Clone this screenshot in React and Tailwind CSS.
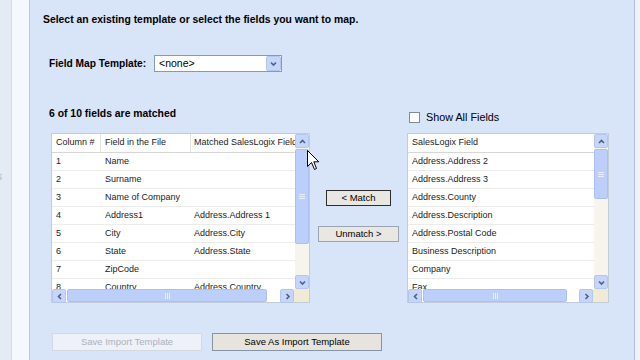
import React from 'react'

const font = "font-['Liberation_Sans',Arial,sans-serif]"

const leftRows = [
  ['1', 'Name', ''],
  ['2', 'Surname', ''],
  ['3', 'Name of Company', ''],
  ['4', 'Address1', 'Address.Address 1'],
  ['5', 'City', 'Address.City'],
  ['6', 'State', 'Address.State'],
  ['7', 'ZipCode', ''],
  ['8', 'Country', 'Address.Country'],
]

const rightRows = [
  'Address.Address 2',
  'Address.Address 3',
  'Address.County',
  'Address.Description',
  'Address.Postal Code',
  'Business Description',
  'Company',
  'Fax',
]

const chevrons = {
  up: 'M2 6 L4.5 3.5 L7 6',
  down: 'M2 3.5 L4.5 6 L7 3.5',
  left: 'M6 2 L3.5 4.5 L6 7',
  right: 'M3.5 2 L6 4.5 L3.5 7',
}

function ArrowBtn({ dir }) {
  return (
    <div className="w-[14px] h-[14px] shrink-0 rounded-[2px] bg-[#c6d6fb] border border-[#b4c6ee] flex items-center justify-center">
      <svg width="9" height="9" viewBox="0 0 9 9">
        <path d={chevrons[dir]} fill="none" stroke="#4d6185" strokeWidth="1.6" />
      </svg>
    </div>
  )
}

function Grip({ vertical }) {
  const line = vertical ? 'w-[6px] h-[1px] bg-[#e8eefc]' : 'w-[1px] h-[6px] bg-[#e8eefc]'
  return (
    <div className={vertical ? 'flex flex-col gap-[1px]' : 'flex gap-[1px]'}>
      <span className={line} />
      <span className={line} />
      <span className={line} />
    </div>
  )
}

function VScroll({ thumb }) {
  return (
    <div className="w-[14px] flex flex-col bg-[#f6f4ec]">
      <ArrowBtn dir="up" />
      <div className={`${thumb} mt-[1px] rounded-[2px] bg-[#bccffa] border border-[#aac0f0] flex items-center justify-center`}>
        <Grip vertical />
      </div>
      <div className="flex-1" />
      <ArrowBtn dir="down" />
    </div>
  )
}

function HScroll({ thumb }) {
  return (
    <div className="h-[13px] flex bg-white">
      <ArrowBtn dir="left" />
      <div className={`${thumb} ml-[1px] rounded-[2px] bg-[#bccffa] border border-[#aac0f0] flex items-center justify-center`}>
        <Grip />
      </div>
      <div className="flex-1" />
      <ArrowBtn dir="right" />
      <div className="w-[15px] bg-[#f1ebd6]" />
    </div>
  )
}

function LeftGrid() {
  return (
    <div className="w-[259px] h-[170px] border border-[#c3cdd9] bg-white flex flex-col">
      <div className="flex flex-1 min-h-0">
        <div className="flex-1 overflow-hidden text-[9px] text-[#1b1b1b] whitespace-nowrap">
          <div className="h-[19px] flex items-center border-b border-[#d6d6d6]">
            <div className="w-[49px] h-full pl-[4px] flex items-center border-r border-[#e2e2e2]">Column #</div>
            <div className="w-[90px] h-full pl-[4px] flex items-center border-r border-[#e2e2e2]">Field in the File</div>
            <div className="flex-1 h-full pl-[3px] flex items-center overflow-hidden">Matched SalesLogix Field</div>
          </div>
          {leftRows.map(r => (
            <div key={r[0]} className="h-[18px] flex items-center border-b border-[#ececec]">
              <div className="w-[49px] pl-[4px]">{r[0]}</div>
              <div className="w-[90px] pl-[4px]">{r[1]}</div>
              <div className="flex-1 pl-[3px]">{r[2]}</div>
            </div>
          ))}
        </div>
        <VScroll thumb="h-[95px]" />
      </div>
      <HScroll thumb="w-[200px]" />
    </div>
  )
}

function RightGrid() {
  return (
    <div className="w-[202px] h-[170px] border border-[#c3cdd9] bg-white flex flex-col">
      <div className="flex flex-1 min-h-0">
        <div className="flex-1 overflow-hidden text-[9px] text-[#1b1b1b] whitespace-nowrap">
          <div className="h-[19px] pl-[4px] flex items-center border-b border-[#d6d6d6]">SalesLogix Field</div>
          {rightRows.map(r => (
            <div key={r} className="h-[18px] pl-[4px] flex items-center border-b border-[#ececec]">
              {r}
            </div>
          ))}
        </div>
        <VScroll thumb="h-[50px]" />
      </div>
      <HScroll thumb="w-[144px]" />
    </div>
  )
}

export default function App() {
  return (
    <div className={`${font} relative w-[640px] h-[360px] overflow-hidden flex bg-[#d8e4f8] text-black`}>
      <div className="w-[12px] bg-[#e5ebf5] border-r border-[#d3dceb] overflow-hidden">
        <div className="mt-[171px] -ml-[3px] text-[10px] leading-[12px] text-[#aab4c6]">s</div>
      </div>
      <div className="w-[18px] bg-[#f5f8fd] border-r border-[#b9c8e2]" />

      <div className="flex-1 flex flex-col whitespace-nowrap">
        <div className="mt-[14px] ml-[13px] h-[12px] leading-[12px] text-[10.4px] font-bold">
          Select an existing template or select the fields you want to map.
        </div>

        <div className="mt-[29px] ml-[19px] h-[17px] flex items-center">
          <div className="w-[105px] text-[10.2px] font-bold">Field Map Template:</div>
          <div className="w-[128px] h-[17px] bg-white border border-[#7f9db9] flex items-center">
            <span className="flex-1 pl-[4px] text-[10.5px]">&lt;none&gt;</span>
            <div className="w-[15px] h-[15px] rounded-[2px] bg-[#c6d6fb] border border-[#b4c6ee] flex items-center justify-center">
              <svg width="9" height="9" viewBox="0 0 9 9">
                <path d={chevrons.down} fill="none" stroke="#4d6185" strokeWidth="1.6" />
              </svg>
            </div>
          </div>
        </div>

        <div className="mt-[36px] h-[15px] flex">
          <div className="ml-[19px] w-[360px] self-start leading-[12px] text-[10.4px] font-bold">6 of 10 fields are matched</div>
          <div className="self-end flex items-center gap-[6px]">
            <span className="w-[11px] h-[11px] bg-white border border-[#808b98]" />
            <span className="text-[10.8px] leading-[12px]">Show All Fields</span>
          </div>
        </div>

        <div className="mt-[10px] ml-[21px] flex">
          <LeftGrid />
          <div className="w-[97px] pt-[57px] flex flex-col items-center gap-[20px] text-[9.5px]">
            <button className="w-[65px] h-[16px] bg-[#e9e7e2] border border-[#2d2d2d] flex items-center justify-center">
              &lt; Match
            </button>
            <button className="w-[81px] h-[16px] bg-[#e9e7e2] border border-[#9aa4b4] flex items-center justify-center">
              Unmatch &gt;
            </button>
          </div>
          <RightGrid />
        </div>

        <div className="mt-[30px] ml-[22px] flex gap-[10px] text-[9.5px]">
          <button className="w-[150px] h-[18px] bg-[#eef1f7] border border-[#d3d9e3] text-[#aab2be] flex items-center justify-center">
            Save Import Template
          </button>
          <button className="w-[170px] h-[18px] bg-[#e7e4dd] border border-[#8793a6] flex items-center justify-center">
            Save As Import Template
          </button>
        </div>
      </div>

      <div className="w-[6px] border-l border-[#b3bfd8] bg-[#eef2fa]" />

      <svg className="absolute left-[307px] top-[150px]" width="13" height="21" viewBox="0 0 13 21">
        <path d="M0.5 0.5 L0.5 16.5 L4.5 12.5 L7.5 19.5 L9.5 18.5 L6.8 11.8 L11.8 11.8 Z" fill="#fff" stroke="#000" strokeWidth="1" />
      </svg>
    </div>
  )
}
